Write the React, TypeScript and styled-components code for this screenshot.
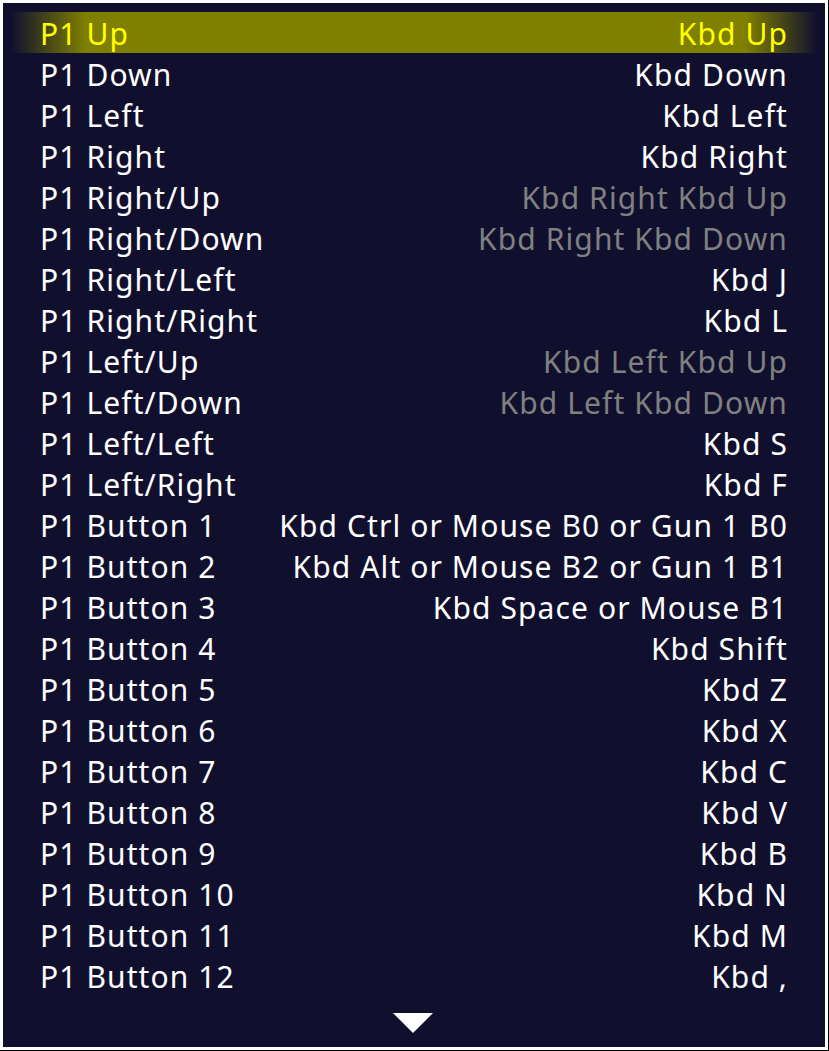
import styled, { createGlobalStyle } from "styled-components";

const GlobalStyle = createGlobalStyle`
  html, body {
    margin: 0;
    padding: 0;
    background: #000;
  }
  body {
    font-family: "Noto Sans", "DejaVu Sans", sans-serif;
  }
`;

type Mapping = {
  input: string;
  binding: string;
  dim?: boolean;
};

const mappings: Mapping[] = [
  { input: "P1 Up", binding: "Kbd Up" },
  { input: "P1 Down", binding: "Kbd Down" },
  { input: "P1 Left", binding: "Kbd Left" },
  { input: "P1 Right", binding: "Kbd Right" },
  { input: "P1 Right/Up", binding: "Kbd Right Kbd Up", dim: true },
  { input: "P1 Right/Down", binding: "Kbd Right Kbd Down", dim: true },
  { input: "P1 Right/Left", binding: "Kbd J" },
  { input: "P1 Right/Right", binding: "Kbd L" },
  { input: "P1 Left/Up", binding: "Kbd Left Kbd Up", dim: true },
  { input: "P1 Left/Down", binding: "Kbd Left Kbd Down", dim: true },
  { input: "P1 Left/Left", binding: "Kbd S" },
  { input: "P1 Left/Right", binding: "Kbd F" },
  { input: "P1 Button 1", binding: "Kbd Ctrl or Mouse B0 or Gun 1 B0" },
  { input: "P1 Button 2", binding: "Kbd Alt or Mouse B2 or Gun 1 B1" },
  { input: "P1 Button 3", binding: "Kbd Space or Mouse B1" },
  { input: "P1 Button 4", binding: "Kbd Shift" },
  { input: "P1 Button 5", binding: "Kbd Z" },
  { input: "P1 Button 6", binding: "Kbd X" },
  { input: "P1 Button 7", binding: "Kbd C" },
  { input: "P1 Button 8", binding: "Kbd V" },
  { input: "P1 Button 9", binding: "Kbd B" },
  { input: "P1 Button 10", binding: "Kbd N" },
  { input: "P1 Button 11", binding: "Kbd M" },
  { input: "P1 Button 12", binding: "Kbd ," },
];

const Panel = styled.div`
  box-sizing: border-box;
  width: 828px;
  height: 1050px;
  border: 3px solid #fff;
  background: #10102e;
  padding: 9px 8px 0;
  display: flex;
  flex-direction: column;
`;

const List = styled.ul`
  list-style: none;
  margin: 0;
  padding: 0;
`;

const Row = styled.li<{ $selected?: boolean }>`
  box-sizing: border-box;
  display: flex;
  justify-content: space-between;
  align-items: center;
  height: 41px;
  padding: 2px 29px 0 29px;
  font-size: 30px;
  letter-spacing: 1.1px;
  white-space: nowrap;
  color: ${({ $selected }) => ($selected ? "#ffff00" : "#ffffff")};
  background: ${({ $selected }) =>
    $selected
      ? "linear-gradient(to right, rgba(128,128,0,0) 0px, #808000 75px, #808000 calc(100% - 72px), rgba(128,128,0,0) 100%)"
      : "transparent"};
`;

const Binding = styled.span<{ $dim?: boolean; $selected?: boolean }>`
  color: ${({ $dim, $selected }) =>
    $selected ? "#ffff00" : $dim ? "#808080" : "inherit"};
`;

const Footer = styled.div`
  display: flex;
  justify-content: center;
  padding-top: 17px;
  padding-right: 3px;
`;

export default function App() {
  return (
    <>
      <GlobalStyle />
      <Panel>
        <List>
          {mappings.map((m, i) => (
            <Row key={m.input} $selected={i === 0}>
              <span>{m.input}</span>
              <Binding $dim={m.dim} $selected={i === 0}>
                {m.binding}
              </Binding>
            </Row>
          ))}
        </List>
        <Footer>
          <svg width="40" height="20" viewBox="0 0 40 20">
            <polygon points="0,0 40,0 20,20" fill="#fff" />
          </svg>
        </Footer>
      </Panel>
    </>
  );
}
